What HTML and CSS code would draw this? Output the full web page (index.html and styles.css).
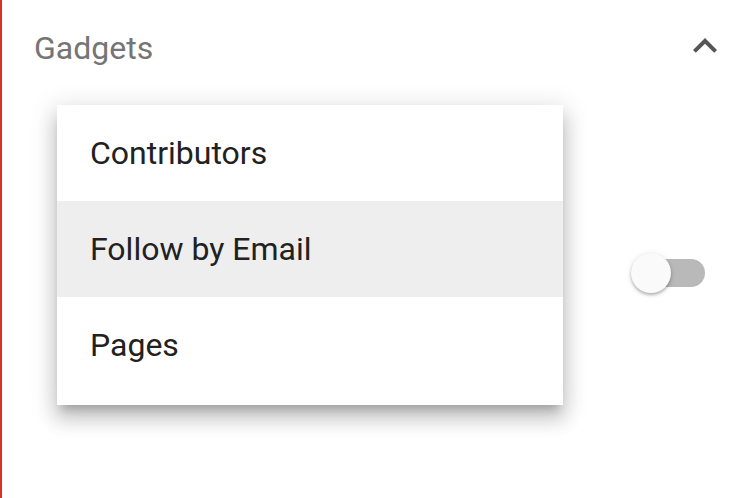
FILE: index.html
```html
<!DOCTYPE html>
<html>
<head>
<meta charset="utf-8">
<link rel="stylesheet" href="styles.css">
</head>
<body>
<div class="panel">
  <div class="header">
    <span class="title">Gadgets</span>
    <span class="chevron">
      <svg viewBox="0 0 24 24" width="48" height="48"><path d="M12 8l-6 6 1.41 1.41L12 10.83l4.59 4.58L18 14z" fill="#555"/></svg>
    </span>
  </div>
  <div class="row">
    <div class="toggle"><span class="track"></span><span class="thumb"></span></div>
  </div>
  <ul class="menu">
    <li class="item">Contributors</li>
    <li class="item active">Follow by Email</li>
    <li class="item">Pages</li>
  </ul>
</div>
</body>
</html>
```
FILE: styles.css
```css
html, body { margin: 0; padding: 0; background: #fff; }
body { font-family: Roboto, "Noto Sans", sans-serif; }
.panel {
  position: relative;
  height: 498px;
  border-left: 2px solid #d93025;
  box-sizing: border-box;
}
.header {
  display: flex;
  align-items: center;
  justify-content: space-between;
  padding: 22px 21px 0 32px;
  height: 48px;
}
.title { font-size: 32px; color: #757575; margin-top: 3px; }
.chevron { display: flex; width: 48px; height: 48px; }
.row {
  display: flex;
  justify-content: flex-end;
  margin-top: 183px;
  padding-right: 45px;
}
.toggle { position: relative; width: 74px; height: 40px; display: flex; align-items: center; justify-content: flex-end; }
.track { width: 68px; height: 28px; border-radius: 14px; background: #b9b9b9; }
.thumb {
  position: absolute; left: 0; top: 0;
  width: 40px; height: 40px; border-radius: 50%;
  background: #fafafa;
  box-shadow: 0 2px 3px rgba(0,0,0,.25), 0 1px 6px rgba(0,0,0,.1);
}
.menu {
  position: absolute;
  left: 55px; top: 105px;
  width: 506px;
  margin: 0; padding: 0 0 12px;
  list-style: none;
  background: #fff;
  box-shadow: 0 14px 17px 2px rgba(0,0,0,.14), 0 5px 24px 4px rgba(0,0,0,.12), 0 9px 9px -5px rgba(0,0,0,.2);
}
.item {
  height: 96px;
  display: flex; align-items: center;
  padding-left: 33px;
  font-size: 32px;
  color: #212121;
}
.item.active { background: #eeeeee; }
```
